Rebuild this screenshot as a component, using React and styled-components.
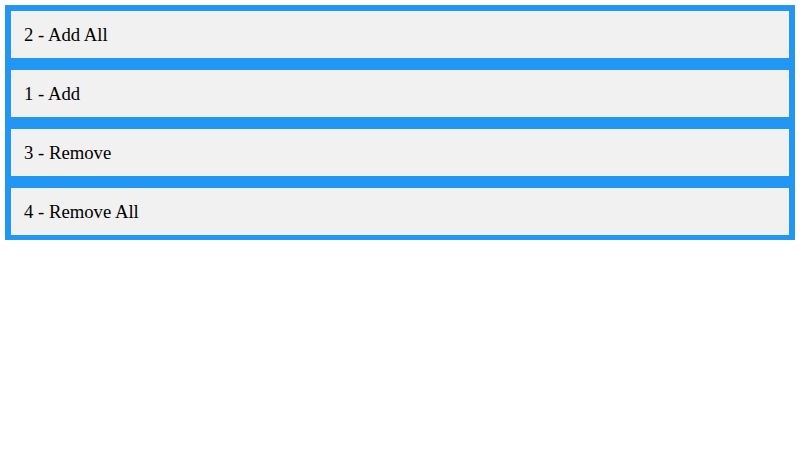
import styled, { createGlobalStyle } from 'styled-components'

const Global = createGlobalStyle`
  body {
    margin: 5px;
    font-family: "Liberation Serif", "Times New Roman", serif;
    background: #ffffff;
  }
`

const List = styled.ul`
  list-style: none;
  margin: 0;
  padding: 6px 6px 5px 6px;
  background: #2196f3;
  display: flex;
  flex-direction: column;
  gap: 12px;
`

const Item = styled.li`
  height: 47px;
  background: #f1f1f1;
  display: flex;
  align-items: center;
  padding: 0 13px;
  font-size: 18.72px;
  color: #000;
`

const items = ['2 - Add All', '1 - Add', '3 - Remove', '4 - Remove All']

export default function App() {
  return (
    <>
      <Global />
      <List>
        {items.map(label => (
          <Item key={label}>{label}</Item>
        ))}
      </List>
    </>
  )
}
